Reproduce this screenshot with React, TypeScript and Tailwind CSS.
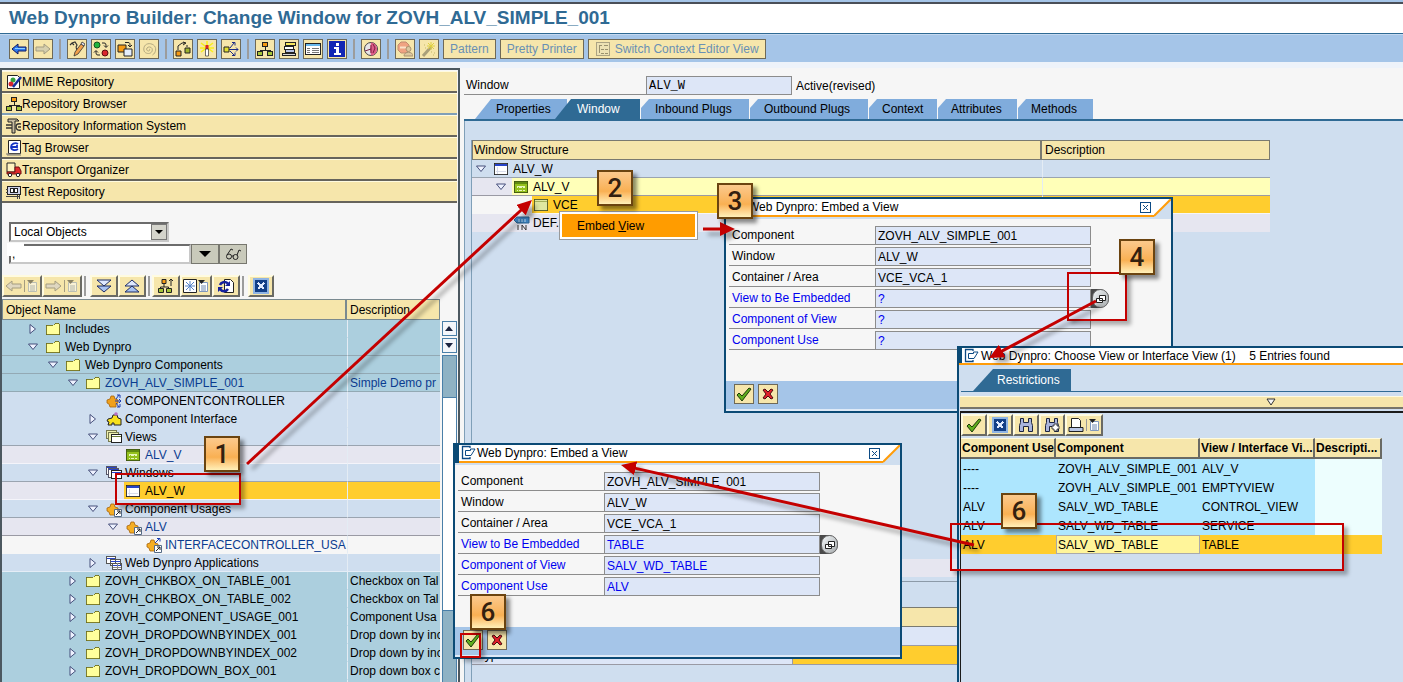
import { Fragment, ReactNode } from "react";
import clsx from "clsx";

interface IconProps {
  children: ReactNode;
  size?: string;
  crisp?: boolean;
}

const Icon = ({ children, size = "size-4", crisp }: IconProps) => (
  <svg
    viewBox="0 0 16 16"
    className={clsx("shrink-0", size)}
    fill="none"
    shapeRendering={crisp ? "crispEdges" : undefined}
    aria-hidden="true"
  >
    {children}
  </svg>
);

/* toolbar icons */

const BackIcon = () => (
  <Icon>
    <path d="M1 8l6-5v3h8v4H7v3z" fill="#2f7bf0" stroke="#101860" />
    <path d="M4 7.5h10" stroke="#8fd0ff" />
  </Icon>
);

const ForwardIcon = () => (
  <Icon>
    <path d="M15 8L9 3v3H1v4h8v3z" fill="#d6cfae" stroke="#a39c80" />
  </Icon>
);

const WrenchPencilIcon = () => (
  <Icon>
    <path d="M1 4l2-2 2 2M3 2l3-1 2 3-1 2M7 6l2 6" stroke="#333" strokeWidth="1.2" />
    <path d="M5 15l1-4 6-8 3 2-6 8z" fill="#f2a04c" stroke="#333" strokeWidth=".8" />
    <path d="M12 3l1-2 3 2-1 2z" fill="#e8e8f8" stroke="#333" strokeWidth=".8" />
  </Icon>
);

const StatusIcon = () => (
  <Icon>
    <circle cx="4" cy="4" r="3" fill="#1fb53c" stroke="#14521e" />
    <circle cx="12" cy="12" r="3" fill="#d9262c" stroke="#5a0d10" />
    <path d="M9 2h2c2 0 2 1 2 4M11 4.500l2 2 2-2M7 14H5c-2 0-2-1-2-4M1 11.500l2-2 2 2" stroke="#222" />
  </Icon>
);

const CopyIcon = () => (
  <Icon>
    <path d="M1 4h8v7H1z" fill="#f59a14" stroke="#222" />
    <path d="M7 8h8v7H7z" fill="#e4eefc" stroke="#222" />
    <path d="M8 1.500h3c2 0 2 1 2 4M11 4l2 2 2-2" stroke="#222" />
  </Icon>
);

const SpiralIcon = () => (
  <Icon>
    <path
      d="M8 8c1 0 1 2-.5 2S5 8.500 6 7s4-1.500 5 .5-.5 5-3.500 5S2 10.500 3 6.500 9 1.500 12.500 4s2.500 8-1 10"
      stroke="#b3a980"
    />
  </Icon>
);

const ConnectIcon = () => (
  <Icon>
    <path d="M1 10h5v5H1z" fill="#f59a14" stroke="#222" />
    <path d="M10 7h5v5h-5z" fill="#9db32d" stroke="#222" />
    <path d="M3 9V5l4-3h3M8 1l3 1-3 2M12 6V4" stroke="#222" />
  </Icon>
);

const MatchIcon = () => (
  <Icon>
    <path d="M2 2l12 9M14 2L2 11M8 0v5M1 7h14" stroke="#f7ee1a" strokeWidth="1.500" />
    <path d="M6.500 4h3v4h-3z" fill="#d8232a" />
    <path d="M6.500 8h3v7h-3z" fill="#fff" stroke="#333" strokeWidth=".7" />
  </Icon>
);

const BranchIcon = () => (
  <Icon>
    <path d="M1 6h5v5H1z" fill="#e2e030" stroke="#222" />
    <path d="M6 8.500h9M7 7l4-5M7 10l4 4M13 6.500l2 2-2 2M9 1.500h3v3M9 14.500h3v-3" stroke="#1d2c86" />
  </Icon>
);

const HierarchyIcon = () => (
  <Icon crisp>
    <path d="M8 6v3M3 11V9h10v2" stroke="#222" />
    <path d="M5.500 1.500h5v4h-5z" fill="#f59a14" stroke="#222" />
    <path d="M.5 10.500h5v4h-5zM10.500 10.500h5v4h-5z" fill="#a4c438" stroke="#222" />
  </Icon>
);

const StackIcon = () => (
  <Icon crisp>
    <path d="M4.500 1.500h10v3h-10z" fill="#f7e85e" stroke="#222" />
    <path d="M3.500 5.500h9v3h-9z" fill="#fff" stroke="#222" />
    <path d="M4.500 8.500h9v3h-9z" fill="#b7c4e4" stroke="#222" />
    <path d="M1.500 12.500h13v2h-13z" fill="#d8d8d8" stroke="#222" />
  </Icon>
);

const ListIcon = () => (
  <Icon crisp>
    <path d="M.5 2.500h15v11H.5z" fill="#fff" stroke="#222" />
    <path d="M1 3h14v2H1z" fill="#68b8ec" />
    <path d="M2 7h3M2 9h3M2 11h3M7 7h7M7 9h7M7 11h7" stroke="#777" />
  </Icon>
);

const InfoIcon = () => (
  <Icon crisp>
    <path d="M0 0h16v16H0z" fill="#1226b4" />
    <path d="M7 2h3v3H7zM5 6h5v6h2v2H5v-2h2V8H5z" fill="#fff" />
  </Icon>
);

const BallIcon = () => (
  <Icon>
    <circle cx="8" cy="8" r="6.500" fill="#e6e4e6" stroke="#444" />
    <path d="M8 1.500c8 1 8 12 0 13l-1-6z" fill="#dd5a86" />
    <path d="M8 4v8M2 10l6-2M10 3l2 4-2 5" stroke="#7b2043" />
  </Icon>
);

const StopIcon = () => (
  <Icon>
    <path d="M4 1h5l3 3v5l-3 3H4L1 9V4z" fill="#f0a382" stroke="#c08c70" />
    <path d="M3 6.500h6" stroke="#fbe2c8" strokeWidth="2" />
    <circle cx="11.500" cy="8" r="2.500" fill="#dcc8a0" stroke="#a89270" />
    <path d="M7 15c0-5 9-5 9 0z" fill="#dcc8a0" stroke="#a89270" />
  </Icon>
);

const WandIcon = () => (
  <Icon>
    <path d="M2 15l8-9" stroke="#aaa079" strokeWidth="3" />
    <path d="M10 1v8M6 5h8M7 2l6 6M13 2L7 8" stroke="#ded03e" />
    <path d="M10 11h1M13 12h1M12 14h1M3 4h1M4 7h1" stroke="#c3b76b" />
  </Icon>
);

const TreeListIcon = () => (
  <Icon crisp>
    <path d="M1.500 1.500h13v13h-13z" fill="#ede2b4" stroke="#aba383" />
    <path d="M4 4h3M4 4v8M6 8h3M6 12h3M9 4h4M10 8h3M10 12h3" stroke="#99916e" />
  </Icon>
);

/* navigation icons */

const MimeIcon = () => (
  <Icon>
    <path d="M1.500 1.500h10l2 2v11h-12z" fill="#fff" stroke="#222" />
    <circle cx="7" cy="6" r="2.500" fill="#35a33d" />
    <circle cx="5" cy="10" r="2.500" fill="#d5262c" />
    <path d="M7 13l8-10" stroke="#17309a" strokeWidth="2.500" />
  </Icon>
);

const ToolsIcon = () => (
  <Icon>
    <path d="M2 1h9l2 2H9v12H6V4H2z" fill="#c8bda0" stroke="#222" />
    <path d="M0 7h6M0 10h6M15 6c-4-1-5 1-5 3s2 4 5 3M15 9h-3" stroke="#333" strokeWidth="1.500" />
  </Icon>
);

const TagIcon = () => (
  <Icon>
    <path d="M2.500.5h12v13h-12z" fill="#fff" stroke="#222" />
    <path d="M0 14h14M1 15h14" stroke="#777" />
    <path d="M12 4c-3-2-7 0-7 3s4 4 7 2M5 7h6V5" stroke="#1534c4" strokeWidth="1.800" />
  </Icon>
);

const TruckIcon = () => (
  <Icon>
    <path d="M1 1h8v9H1z" fill="#fff3c0" stroke="#222" />
    <path d="M9 5h4l2 4v3H1v-2h8z" fill="#df2a2a" stroke="#701010" />
    <circle cx="4" cy="13" r="1.700" fill="#fff" stroke="#222" />
    <circle cx="12" cy="13" r="1.700" fill="#fff" stroke="#222" />
  </Icon>
);

const TestIcon = () => (
  <Icon crisp>
    <path d="M1.500 2.500h13v8h-13z" fill="#d0d4ea" stroke="#222" />
    <path d="M4.500 4.500h3v4h-3zM8.500 4.500h3v4h-3z" fill="#fff" stroke="#222" />
    <path d="M0 5h2M0 8h2M0 12h13M11 11v4M13 11v4" stroke="#444" />
  </Icon>
);

/* tree icons */

const FolderIcon = () => (
  <Icon size="h-[14px] w-[14px]" crisp>
    <path d="M.5 3.500h8l2-2h4l1 1v12H.5z" fill="#ffff9c" stroke="#6b6b1c" />
  </Icon>
);

const WindowIcon = () => (
  <Icon size="h-[14px] w-[14px]" crisp>
    <path d="M.5 1.500h15v13H.5z" fill="#fff" stroke="#222" />
    <path d="M1 2h14v2H1z" fill="#2744c8" />
    <path d="M4 6v8M2 11h12" stroke="#d4d8e8" />
  </Icon>
);

const ViewIcon = () => (
  <Icon size="h-[14px] w-[14px]" crisp>
    <path d="M.5 1.500h15v13H.5z" fill="#94c11c" stroke="#3c5410" />
    <path d="M1 2h14v2H1z" fill="#5f8a10" />
    <path d="M3 7h10M3 9h2M6 9h3M10 9h3M3 12h2M6 12h3M10 12h3" stroke="#f4ffd0" />
  </Icon>
);

const ContainerIcon = () => (
  <Icon size="h-[14px] w-[14px]" crisp>
    <path d="M.5 1.500h15v13H.5z" fill="#dfe7a0" stroke="#4c5420" />
    <path d="M1 4h14" stroke="#9aa850" />
  </Icon>
);

const ViewsIcon = () => (
  <Icon crisp>
    <path d="M.5 1.500h10v8H.5z" fill="#eef0b0" stroke="#777a50" />
    <path d="M2.500 3.500h10v9h-10z" fill="#eef0b0" stroke="#777a50" />
    <path d="M5.500 5.500h10v8h-10z" fill="#fff" stroke="#222" />
    <path d="M6 7h9" stroke="#6a7a30" />
  </Icon>
);

const WindowsIcon = () => (
  <Icon crisp>
    <path d="M.5 1.500h10v8H.5z" fill="#fff" stroke="#556" />
    <path d="M2.500 3.500h10v9h-10z" fill="#fff" stroke="#556" />
    <path d="M5.500 5.500h10v8h-10z" fill="#fff" stroke="#222" />
    <path d="M1 2h9M3 4h9M6 7h9" stroke="#2744c8" />
  </Icon>
);

const ApplicationsIcon = () => (
  <Icon crisp>
    <path d="M.5 1.500h9v7h-9zM4.500 4.500h10v6h-10zM6.500 8.500h9v6h-9z" fill="#fff" stroke="#555" />
    <path d="M1 3h8M5 6h9M7 10h8" stroke="#2744c8" />
    <path d="M11 8v7M7 12h8" stroke="#888" />
  </Icon>
);

const piece = "M1 7l3-1 1-3h3l1 3 3 1v3l-2 1v3H4l-1-3-2-1z";

const ControllerIcon = () => (
  <Icon>
    <path d={piece} fill="#f0a01c" stroke="#a8640a" strokeWidth=".8" />
    <path d="M9 8h6M10 6l3-4M10 10l3 4M11 2h3v3M11 14h3v-3M13 6l2 2-2 2" stroke="#1c3cb0" />
  </Icon>
);

const InterfaceIcon = () => (
  <Icon>
    <path d="M2 8l4-1 1-3h4l1 3 3 1v6H8v-2H6v2H2l1-3-2-1z" fill="#f7e01c" stroke="#222" />
    <circle cx="10" cy="3" r="1.800" fill="#b46fc0" />
  </Icon>
);

const UsageIcon = () => (
  <Icon>
    <path d={piece} fill="#f5ae24" stroke="#a8640a" strokeWidth=".8" />
    <path d="M8.500 8.500h7v7h-7z" fill="#fff" stroke="#556a86" />
    <path d="M10 14l4-4M11 10h3v3" stroke="#222" />
  </Icon>
);

const UsageControllerIcon = () => (
  <Icon>
    <path d={piece} fill="#f5ae24" stroke="#a8640a" strokeWidth=".8" />
    <path d="M9 6l4-4M11 1.500h3v3" stroke="#1c3cb0" />
    <path d="M8.500 8.500h7v7h-7z" fill="#fff" stroke="#556a86" />
    <path d="M10 14l4-4M11 10h3v3" stroke="#222" />
  </Icon>
);

const PlugIcon = () => (
  <Icon>
    <path d="M0 5l3-3h12v6H3z" fill="#3f86c4" stroke="#2a628f" />
    <path d="M5 4v3M8 4v3M11 4v3" stroke="#bfe0f5" />
    <path d="M4 10v5M8 15v-5l4 5v-5" stroke="#333" />
  </Icon>
);

/* browser panel icons */

const MenuSheet = ({ x }: { x: number }) => (
  <g transform={`translate(${x} 0)`}>
    <path d="M1.500 4.500h8v9h-8z" fill="#fff" stroke="#7f97bd" />
    <path d="M3 8h5M3 10h5M3 12h5" stroke="#6f88b0" />
    <path d="M0 2h7L3.500 6z" fill="#222" />
  </g>
);

const ArrowMenuIcon = ({ flip }: { flip?: boolean }) => (
  <svg viewBox="0 0 34 16" className="h-4 w-[34px] opacity-50" fill="none" aria-hidden="true">
    <path
      d={flip ? "M16 8l-6-5v3H1v4h9v3z" : "M1 8l6-5v3h9v4H7v3z"}
      fill="#c9c9d6"
      stroke="#555"
    />
    <path d="M19.500 2v12" stroke="#555" />
    <MenuSheet x={22} />
  </svg>
);

const ExpandIcon = () => (
  <Icon>
    <path d="M1 2h14L8 8z" fill="#dfe9ff" stroke="#1d2c66" />
    <path d="M1 8h14l-7 6z" fill="#a9c3f2" stroke="#1d2c66" />
  </Icon>
);

const CollapseIcon = () => (
  <Icon>
    <path d="M1 8h14L8 2z" fill="#dfe9ff" stroke="#1d2c66" />
    <path d="M1 14h14L8 8z" fill="#a9c3f2" stroke="#1d2c66" />
  </Icon>
);

const TreeUpIcon = () => (
  <Icon>
    <path d="M6 6v3M2.500 11V9h8v2" stroke="#222" />
    <path d="M4 1.500h4v4H4z" fill="#f59a14" stroke="#222" />
    <path d="M.5 10.500h5v4h-5zM8.500 10.500h5v4h-5z" fill="#a4c438" stroke="#222" />
    <path d="M13 8V1M11 3l2-2 2 2" stroke="#222" />
  </Icon>
);

const NewMenuIcon = () => (
  <svg viewBox="0 0 26 16" className="h-4 w-[26px]" fill="none" aria-hidden="true">
    <path d="M.5 1.500h13v13H.5z" fill="#fff" stroke="#222" />
    <path d="M7 3v10M2 8h10M3 4l8 8M11 4l-8 8" stroke="#5583c8" />
    <MenuSheet x={15} />
  </svg>
);

const RefreshIcon = () => (
  <Icon>
    <path d="M6.500 1.500h6l3 3v10h-9z" fill="#fff" stroke="#222" />
    <path d="M10 5.500C7 3 3 4 2 7M2 11c2 3 6 3 8 0" stroke="#14209c" strokeWidth="2.500" />
    <path d="M7 8h5V3zM5 9H0v5z" fill="#14209c" />
  </Icon>
);

const CloseBoxIcon = () => (
  <Icon crisp>
    <path d="M.5.5h15v15H.5z" fill="#8fb4e4" stroke="#8fb4e4" />
    <path d="M2 2h12v12H2z" fill="#123f86" />
    <path d="M5 5l6 6M11 5l-6 6" stroke="#dfeaff" strokeWidth="1.500" />
  </Icon>
);

const GlassesIcon = () => (
  <Icon>
    <circle cx="4" cy="10.500" r="2.500" stroke="#222" />
    <circle cx="10.500" cy="11" r="2.500" stroke="#222" />
    <path d="M2 9l4-6 2 1M12 9l2-5 2 1M6.500 10h2" stroke="#222" />
  </Icon>
);

const CheckIcon = () => (
  <Icon>
    <path d="M1 9l2-2 3 3 7-8 2 1-9 12z" fill="#5fae1e" stroke="#1c3a08" />
  </Icon>
);

const CrossIcon = () => (
  <Icon>
    <path
      d="M3 4l2-1 3 3 3-3 2 1-3 4 3 4-2 1-3-3-3 3-2-1 3-4z"
      fill="#e0202a"
      stroke="#4a0a0e"
    />
  </Icon>
);

const FindIcon = ({ plus }: { plus?: boolean }) => (
  <Icon>
    <path
      d="M2.500 1.500h3v4h5v-4h3v4l1 3v6h-4v-5h-5v5h-4v-6l1-3z"
      fill="#a9b4dc"
      stroke="#1c2440"
    />
    {plus && (
      <path d="M10 7h3v2h2v3h-2v2h-3v-2H8V9h2z" fill="#fff" stroke="#222" strokeWidth=".8" />
    )}
  </Icon>
);

const PrintMenuIcon = () => (
  <svg viewBox="0 0 32 16" className="h-4 w-8" fill="none" aria-hidden="true">
    <path d="M3.500 1.500h7l2 2v7h-9z" fill="#fff" stroke="#222" />
    <path d="M1 10.500h14v4H1z" fill="#b8c6e6" stroke="#222" />
    <path d="M18.500 2v12" stroke="#999" />
    <MenuSheet x={21} />
  </svg>
);

const ExitIcon = () => (
  <Icon>
    <path d="M9 3V1.500H1.500v12H9V12" stroke="#0d4a84" strokeWidth="1.300" />
    <path d="M4.500 5.500h5V4h4.500l-4 6.500h-5.500z" fill="#fff" stroke="#0d4a84" />
  </Icon>
);

/* shared pieces */

const buttonSizes = {
  flat: "size-5 border border-[#6e6957]",
  small:
    "h-[22px] border-2 border-t-[#fffbe0] border-r-[#6a6a64] border-b-[#6a6a64] border-l-[#fffbe0] px-[3px]",
  large:
    "h-[22px] border-2 border-t-[#fffbe0] border-r-[#6a6a64] border-b-[#6a6a64] border-l-[#fffbe0] px-1",
};

const ToolButton = ({
  label,
  children,
  size = "flat",
}: {
  label: string;
  children: ReactNode;
  size?: keyof typeof buttonSizes;
}) => (
  <button
    aria-label={label}
    className={clsx("flex shrink-0 items-center justify-center bg-[#f6e6ab]", buttonSizes[size])}
  >
    {children}
  </button>
);

const Separator = () => (
  <span className="flex h-5 w-[6px] shrink-0 justify-center">
    <span className="h-full w-0.5 bg-[#9c9c9c]" />
  </span>
);

const Expander = ({ open }: { open: boolean }) => (
  <svg viewBox="0 0 10 10" className="size-[10px]" aria-hidden="true">
    <path
      d={open ? "M.5 2h9L5 7.500z" : "M2 .5v9L7.500 5z"}
      fill="#eef2ff"
      stroke="#35406e"
      strokeWidth=".9"
    />
  </svg>
);

interface TreeNode {
  name: string;
  level: number;
  icon: ReactNode;
  open?: boolean;
  link?: boolean;
  description?: string;
  row: string;
  mark?: string;
}

const TreeRow = ({ node, base }: { node: TreeNode; base: number }) => (
  <tr className={clsx("h-[18px]", node.row)}>
    <td className="overflow-hidden border-b border-inherit p-0">
      <div
        className={clsx("flex h-[17px] items-center whitespace-nowrap", node.link && "text-[#0b3c90]")}
        style={{ paddingLeft: base + node.level * 20 }}
      >
        <span className="flex w-4 shrink-0">
          {node.open !== undefined && <Expander open={node.open} />}
        </span>
        <span className={clsx("flex h-full grow items-center gap-[5px] pl-0.5", node.mark)}>
          <span className="flex w-[14px] shrink-0">{node.icon}</span>
          {node.name}
        </span>
      </div>
    </td>
    <td
      className={clsx(
        "overflow-hidden border-b border-l border-inherit border-l-[#e4ecf4] p-0 pl-0.5 whitespace-nowrap",
        node.link && "text-[#0b3c90]",
        node.mark
      )}
    >
      {node.description}
    </td>
  </tr>
);

const teal = "bg-[#accfde] border-[#accfde]";
const tealLine = "bg-[#accfde] border-[#93a9b4]";
const blue = "bg-[#cfdeef] border-[#cfdeef]";
const blueLine = "bg-[#cfdeef] border-[#9aa4b0]";
const lilac = "bg-[#e6e6f0] border-[#f4f4fa]";
const lilacLine = "bg-[#e6e6f0] border-[#9a9aa4]";
const pale = "bg-[#f6f6f6] border-[#f6f6f6]";

const objects: TreeNode[] = [
  { name: "Includes", level: 1, icon: <FolderIcon />, open: false, row: teal },
  { name: "Web Dynpro", level: 1, icon: <FolderIcon />, open: true, row: tealLine },
  { name: "Web Dynpro Components", level: 2, icon: <FolderIcon />, open: true, row: tealLine },
  {
    name: "ZOVH_ALV_SIMPLE_001",
    level: 3,
    icon: <FolderIcon />,
    open: true,
    link: true,
    description: "Simple Demo pr",
    row: tealLine,
  },
  { name: "COMPONENTCONTROLLER", level: 4, icon: <ControllerIcon />, row: blue },
  { name: "Component Interface", level: 4, icon: <InterfaceIcon />, open: false, row: blue },
  { name: "Views", level: 4, icon: <ViewsIcon />, open: true, row: blueLine },
  { name: "ALV_V", level: 5, icon: <ViewIcon />, link: true, row: lilac },
  { name: "Windows", level: 4, icon: <WindowsIcon />, open: true, row: blueLine },
  { name: "ALV_W", level: 5, icon: <WindowIcon />, row: lilac, mark: "bg-[#ffcd2e]" },
  { name: "Component Usages", level: 4, icon: <UsageIcon />, open: true, row: blueLine },
  { name: "ALV", level: 5, icon: <UsageIcon />, open: true, link: true, row: lilacLine },
  { name: "INTERFACECONTROLLER_USA", level: 6, icon: <UsageControllerIcon />, link: true, row: pale },
  {
    name: "Web Dynpro Applications",
    level: 4,
    icon: <ApplicationsIcon />,
    open: false,
    row: "bg-[#cfdeef] border-[#e4edf6]",
  },
  ...[
    ["ZOVH_CHKBOX_ON_TABLE_001", "Checkbox on Tal"],
    ["ZOVH_CHKBOX_ON_TABLE_002", "Checkbox on Tal"],
    ["ZOVH_COMPONENT_USAGE_001", "Component Usa"],
    ["ZOVH_DROPDOWNBYINDEX_001", "Drop down by inc"],
    ["ZOVH_DROPDOWNBYINDEX_002", "Drop down by inc"],
    ["ZOVH_DROPDOWN_BOX_001", "Drop down box c"],
    ["", ""],
  ].map(([name, description]) => ({
    name,
    description,
    level: 3,
    icon: <FolderIcon />,
    open: false,
    row: teal,
  })),
];

const structure: TreeNode[] = [
  { name: "ALV_W", level: 1, icon: <WindowIcon />, open: true, row: blueLine },
  { name: "ALV_V", level: 2, icon: <ViewIcon />, open: true, row: lilacLine, mark: "bg-[#ffffb8]" },
  { name: "VCE", level: 3, icon: <ContainerIcon />, row: pale, mark: "bg-[#ffcd2e]" },
  { name: "DEF.", level: 2, icon: <PlugIcon />, row: "bg-[#e6e6f0] border-[#e6e6f0]" },
];

/* page sections */

const toolGroups: [string, ReactNode][][] = [
  [
    ["Back", <BackIcon />],
    ["Forward", <ForwardIcon />],
  ],
  [
    ["Display / Change", <WrenchPencilIcon />],
    ["Active / Inactive", <StatusIcon />],
    ["Other Object", <CopyIcon />],
    ["Enhance", <SpiralIcon />],
  ],
  [
    ["Check", <ConnectIcon />],
    ["Activate", <MatchIcon />],
    ["Where-Used List", <BranchIcon />],
  ],
  [
    ["Object List", <HierarchyIcon />],
    ["Navigation Window", <StackIcon />],
    ["Full Screen", <ListIcon />],
    ["Help", <InfoIcon />],
  ],
  [["Wizard", <BallIcon />]],
  [
    ["Stop", <StopIcon />],
    ["Magic", <WandIcon />],
  ],
];

const Toolbar = () => (
  <div className="flex h-7 shrink-0 items-center gap-1 border-t border-[#c5d9f0] bg-[#a5c5e8] px-[9px]">
    {toolGroups.map((group, i) => (
      <Fragment key={i}>
        {i > 0 && <Separator />}
        {group.map(([label, icon]) => (
          <ToolButton key={label} label={label}>
            {icon}
          </ToolButton>
        ))}
      </Fragment>
    ))}
    {["Pattern", "Pretty Printer", "Switch Context Editor View"].map((label, i) => (
      <button
        key={label}
        className="flex h-5 items-center gap-1 border border-[#6e6957] bg-[#f6e6ab] px-[6px] whitespace-nowrap text-[#6990b4]"
      >
        {i === 2 && <TreeListIcon />}
        {label}
      </button>
    ))}
  </div>
);

const navItems: [string, ReactNode][] = [
  ["MIME Repository", <MimeIcon />],
  ["Repository Browser", <HierarchyIcon />],
  ["Repository Information System", <ToolsIcon />],
  ["Tag Browser", <TagIcon />],
  ["Transport Organizer", <TruckIcon />],
  ["Test Repository", <TestIcon />],
];

const ScrollButton = ({ label, d }: { label: string; d: string }) => (
  <button
    aria-label={label}
    className="flex h-[15px] w-[15px] items-center justify-center border border-[#4a7fa8] bg-[#f4f6fa]"
  >
    <svg viewBox="0 0 8 5" className="h-[5px] w-2" aria-hidden="true">
      <path d={d} fill="#1c2440" />
    </svg>
  </button>
);

const Browser = () => (
  <aside className="flex w-[460px] shrink-0 flex-col overflow-hidden border-t-2 border-r-2 border-l-2 border-[#4c5860] bg-[#f6f6f6]">
    <nav className="flex flex-col pt-px pr-px">
      {navItems.map(([label, icon], i) => (
        <button
          key={label}
          className={clsx(
            "flex h-[22px] items-center border-t border-b-2 border-t-[#fffbe0] bg-[#f6e6ab] pl-1",
            i === 1 ? "border-b-[#7f9fb8]" : "border-b-[#66645c]"
          )}
        >
          {icon}
          {label}
        </button>
      ))}
    </nav>

    <div className="flex flex-col gap-0.5 px-[7px] pt-[19px]">
      <div className="relative w-[160px]">
        <select
          aria-label="Object category"
          className="h-5 w-full appearance-none border-2 border-[#6c6c6c] border-r-[#c8c8c8] border-b-[#c8c8c8] bg-white pl-[3px]"
        >
          <option>Local Objects</option>
        </select>
        <span className="pointer-events-none absolute top-0.5 right-0.5 flex h-4 w-4 items-center justify-center border border-[#777] bg-[#d4d4cc]">
          <svg viewBox="0 0 8 4" className="h-1 w-2" aria-hidden="true">
            <path d="M0 0h8L4 4z" />
          </svg>
        </span>
      </div>
      <div className="relative flex">
        <input
          aria-label="Object name"
          defaultValue=","
          className="h-5 w-[182px] border-2 border-[#6c6c6c] border-r-[#c8c8c8] border-b-[#c8c8c8] bg-white pl-px"
        />
        <span className="absolute -top-px -left-0.5 h-[13px] w-[17px] bg-white" />
        <button
          aria-label="History"
          className="flex h-5 w-7 items-center justify-center border border-[#77776f] bg-[#c9cabb]"
        >
          <svg viewBox="0 0 12 6" className="h-[6px] w-3" aria-hidden="true">
            <path d="M0 0h12L6 6z" />
          </svg>
        </button>
        <button
          aria-label="Display"
          className="flex h-5 w-7 items-center justify-center border border-[#77776f] bg-[#c9cabb]"
        >
          <GlassesIcon />
        </button>
      </div>
    </div>

    <div className="mt-[11px] flex items-center">
      <ToolButton label="Previous object" size="large">
        <span className="-mx-[3px]">
          <ArrowMenuIcon />
        </span>
      </ToolButton>
      <ToolButton label="Next object" size="large">
        <span className="-mx-[3px]">
          <ArrowMenuIcon flip />
        </span>
      </ToolButton>
      <Separator />
      <span className="w-0.5" />
      <ToolButton label="Expand" size="large">
        <ExpandIcon />
      </ToolButton>
      <ToolButton label="Collapse" size="large">
        <CollapseIcon />
      </ToolButton>
      <Separator />
      <ToolButton label="Up one level" size="large">
        <TreeUpIcon />
      </ToolButton>
      <ToolButton label="Favorites" size="large">
        <span className="-mx-[3px]">
          <NewMenuIcon />
        </span>
      </ToolButton>
      <ToolButton label="Refresh" size="large">
        <RefreshIcon />
      </ToolButton>
      <Separator />
      <span className="w-0.5" />
      <ToolButton label="Close" size="small">
        <CloseBoxIcon />
      </ToolButton>
    </div>

    <div className="mt-0.5 flex min-h-0 flex-1">
      <div className="w-[438px] overflow-hidden">
        <table className="w-full table-fixed border-separate border-spacing-0 leading-4">
          <colgroup>
            <col className="w-[345px]" />
            <col />
          </colgroup>
          <thead>
            <tr className="h-[21px] bg-[#f6e6ab] text-left">
              <th className="border border-r-2 border-[#7a8a90] p-0 pl-[3px] font-normal">Object Name</th>
              <th className="border-y border-r border-[#7a8a90] p-0 pl-[3px] font-normal">Description</th>
            </tr>
          </thead>
          <tbody>
            {objects.map((node, i) => (
              <TreeRow key={i} node={node} base={6} />
            ))}
          </tbody>
        </table>
      </div>
      <div className="flex flex-1 flex-col items-center gap-0.5 bg-[#f6f6f6] pt-[22px]">
        <ScrollButton label="Scroll up" d="M0 5h8L4 0z" />
        <ScrollButton label="Scroll down" d="M0 0h8L4 5z" />
        <div className="flex w-[15px] flex-1 flex-col border-x border-[#4a7fa8] bg-white">
          <span className="h-[43px] border-y border-[#4a7fa8] bg-[#8fb2c4]" />
          <span className="h-[212px]" />
          <span className="flex-1 border-t border-[#4a7fa8] bg-[#8fb2c4]" />
        </div>
      </div>
    </div>
  </aside>
);

const slant = "[clip-path:polygon(16px_0,100%_0,100%_100%,0_100%)]";
const notch = "ml-px [clip-path:polygon(8px_0,100%_0,100%_100%,0_100%,0_9px)]";

const tabs = [
  { label: "Properties", className: clsx(slant, "w-[92px] bg-[#80acdc] pl-[21px]") },
  { label: "Window", className: clsx(slant, "-ml-3 w-[85px] bg-[#2f6a94] pl-[22px] text-white") },
  { label: "Inbound Plugs", className: clsx(notch, "w-[108px] bg-[#80acdc] pl-[14px]") },
  { label: "Outbound Plugs", className: clsx(notch, "w-[118px] bg-[#80acdc] pl-[14px]") },
  { label: "Context", className: clsx(notch, "w-[68px] bg-[#80acdc] pl-[13px]") },
  { label: "Attributes", className: clsx(notch, "w-[79px] bg-[#80acdc] pl-[13px]") },
  { label: "Methods", className: clsx(notch, "w-[75px] bg-[#80acdc] pl-[13px]") },
];

const Editor = () => (
  <main className="flex min-w-0 flex-1 flex-col bg-[#f6f6f6] pl-1">
    <div className="flex shrink-0 items-end pt-2">
      <label htmlFor="window" className="flex h-[19px] w-[182px] items-center border-b border-[#8c8c8c] pl-0.5">
        Window
      </label>
      <input
        id="window"
        readOnly
        value="ALV_W"
        className="h-[19px] w-[146px] border border-[#8c8c8c] bg-[#dde6f7] pl-0.5 font-['Liberation_Mono',monospace]"
      />
      <span className="pb-px pl-1">Active(revised)</span>
    </div>

    <div className="mt-1 flex shrink-0 border-b-2 border-[#2f6a94] pl-[11px]">
      {tabs.map((tab) => (
        <button key={tab.label} className={clsx("h-5 shrink-0 text-left whitespace-nowrap", tab.className)}>
          {tab.label}
        </button>
      ))}
    </div>

    <div className="min-h-0 flex-1 overflow-hidden border-l border-[#7f9fb8] bg-[#cfdeef] pt-[19px] pl-[6px]">
      <div className="flex min-h-full flex-col border-l border-[#7f9fb8]">
        <div className="h-[419px]">
          <table className="w-[798px] table-fixed border-separate border-spacing-0 leading-4">
            <colgroup>
              <col className="w-[570px]" />
              <col />
            </colgroup>
            <thead>
              <tr className="h-[20px] bg-[#f6e6ab] text-left">
                <th className="border border-r-2 border-[#7a7a70] p-0 pl-px font-normal">Window Structure</th>
                <th className="border-y border-r border-[#7a7a70] p-0 pl-[3px] font-normal">Description</th>
              </tr>
            </thead>
            <tbody>
              {structure.map((node) => (
                <TreeRow key={node.name} node={node} base={-16} />
              ))}
            </tbody>
          </table>
        </div>
        <div className="h-[18px] w-[798px] bg-[#e6e6f0]" />
        <div className="mt-1 h-[26px] border-t border-[#8c9aa8]" />
        <table className="w-[798px] table-fixed border-separate border-spacing-0 leading-4">
          <colgroup>
            <col className="w-[320px]" />
            <col />
          </colgroup>
          <thead>
            <tr className="h-5 bg-[#f6e6ab] text-left">
              <th className="border border-[#7a7a70] p-0 pl-[6px] font-normal">Property</th>
              <th className="border-y border-[#7a7a70] p-0 pl-1 font-normal">Value</th>
            </tr>
          </thead>
          <tbody>
            <tr className="h-[19px] bg-[#dde6f7]">
              <td className="border-b border-[#9a9aa4] p-0 pl-[6px]">Name</td>
              <td className="border-b border-l border-[#9a9aa4] p-0 pl-1">VCE</td>
            </tr>
            <tr className="h-[19px]">
              <td className="border-b border-[#9a9aa4] bg-[#dde6f7] p-0 pl-[6px]">Type</td>
              <td className="border-b border-l border-[#9a9aa4] bg-[#ffcd2e] p-0 pl-1">View-Container</td>
            </tr>
          </tbody>
        </table>
      </div>
    </div>
  </main>
);

/* popups */

interface EmbedDialogProps {
  id: string;
  className: string;
  view: string;
  componentOfView: string;
  componentUse: string;
}

const EmbedDialog = ({ id, className, view, componentOfView, componentUse }: EmbedDialogProps) => {
  const fields = [
    { label: "Component", value: "ZOVH_ALV_SIMPLE_001" },
    { label: "Window", value: "ALV_W" },
    { label: "Container / Area", value: "VCE_VCA_1" },
    { label: "View to Be Embedded", value: view, editable: true, help: true },
    { label: "Component of View", value: componentOfView, editable: true },
    { label: "Component Use", value: componentUse, editable: true },
  ];

  return (
    <section
      role="dialog"
      aria-label="Web Dynpro: Embed a View"
      className={clsx("absolute flex w-[449px] flex-col border-2 border-[#0b4a75] bg-[#f6f6f6]", className)}
    >
      <header className="flex h-[18px] items-center bg-[#cfdeef]">
        <span className="h-full w-1 shrink-0 bg-[#0b4a75]" />
        <div className="flex h-full flex-1 items-center border-b-2 border-[#ff9c0a] bg-white pr-[3px] pl-0.5">
          <ExitIcon />
          <h2 className="flex-1">Web Dynpro: Embed a View</h2>
          <button
            aria-label="Close"
            className="flex size-[11px] items-center justify-center border border-[#0d4a84] bg-white"
          >
            <svg viewBox="0 0 7 7" className="size-[7px]" stroke="#0d4a84" aria-hidden="true">
              <path d="M1 1l5 5M6 1L1 6" />
            </svg>
          </button>
        </div>
        <svg viewBox="0 0 17 18" className="h-[18px] w-[17px] shrink-0" aria-hidden="true">
          <path d="M0 0h17L0 17z" fill="#fff" />
          <path d="M0 17L17 0" stroke="#ff9c0a" strokeWidth="2" />
        </svg>
      </header>

      <form className="flex flex-col gap-0.5 border-t-2 border-[#cfdeef] px-[3px] pt-[7px] pb-[31px]">
        {fields.map((field) => (
          <div key={field.label} className={clsx("flex", field.editable && "text-[#0000f0]")}>
            <label
              htmlFor={`${id}-${field.label}`}
              className="flex h-[19px] w-[146px] items-center border-b border-[#8c8c8c] pl-[3px]"
            >
              {field.label}
            </label>
            <input
              id={`${id}-${field.label}`}
              defaultValue={field.value}
              readOnly={!field.editable}
              className="h-[19px] w-[216px] border border-[#8c8c8c] bg-[#dde6f7] pl-0.5"
            />
            {field.help && (
              <button
                type="button"
                aria-label="Search help"
                className="flex h-[19px] w-[18px] items-center justify-end rounded-r-full bg-[#4a4a4a]"
              >
                <span className="flex h-[19px] w-[17px] items-center justify-center rounded-full border border-[#6a6a6a] bg-linear-to-br from-[#f2f6f8] to-[#a8acae]">
                  <svg viewBox="0 0 10 10" className="size-[10px]" fill="#fff" stroke="#222" aria-hidden="true">
                    <path d="M3.500 1.500h6v5h-6zM.5 4.500h6v4h-6z" />
                  </svg>
                </span>
              </button>
            )}
          </div>
        ))}
      </form>

      <footer className="flex h-[30px] items-start gap-1 border-b-2 border-[#dfeaf7] bg-[#a5c5e8] px-2 pt-[3px]">
        <ToolButton label="Continue">
          <CheckIcon />
        </ToolButton>
        <ToolButton label="Cancel">
          <CrossIcon />
        </ToolButton>
      </footer>
    </section>
  );
};

const entries = [
  ["----", "ZOVH_ALV_SIMPLE_001", "ALV_V"],
  ["----", "ZOVH_ALV_SIMPLE_001", "EMPTYVIEW"],
  ["ALV", "SALV_WD_TABLE", "CONTROL_VIEW"],
  ["ALV", "SALV_WD_TABLE", "SERVICE"],
  ["ALV", "SALV_WD_TABLE", "TABLE"],
];

const ChooseViewDialog = () => (
  <section
    role="dialog"
    aria-label="Web Dynpro: Choose View or Interface View"
    className="absolute top-[346px] right-0 bottom-0 left-[957px] flex flex-col overflow-hidden border-t-2 border-l-2 border-[#0b4a75] bg-[#cfdeef]"
  >
    <header className="flex h-[17px] shrink-0 items-center border-b-2 border-[#ff9c0a] bg-white">
      <span className="h-full w-[3px] shrink-0 bg-[#0b4a75]" />
      <span className="ml-0.5 flex">
        <ExitIcon />
      </span>
      <h2 className="pl-px whitespace-pre">Web Dynpro: Choose View or Interface View (1)    5 Entries found</h2>
    </header>

    <div className="mx-0.5 mt-1 flex shrink-0 border-b border-[#2f6a94] pl-3">
      <button className="h-[22px] w-[98px] bg-[#2f6a94] pl-6 text-left text-white [clip-path:polygon(20px_0,100%_0,100%_100%,0_100%)]">
        Restrictions
      </button>
    </div>

    <button
      aria-label="Show restrictions"
      className="mt-1 ml-px flex h-[13px] shrink-0 items-center justify-center border-t border-b-2 border-t-[#fffbe0] border-b-[#77756a] bg-[#f6e6ab] pl-[178px]"
    >
      <svg viewBox="0 0 10 8" className="h-2 w-[10px]" aria-hidden="true">
        <path d="M1 1h8L5 7z" fill="#f5f5f5" stroke="#333" />
      </svg>
    </button>

    <div className="mt-0.5 ml-px flex min-h-0 flex-1 flex-col border-t-2 border-l border-[#1a1a1a]">
      <div className="flex py-px">
        <ToolButton label="Copy" size="small">
          <CheckIcon />
        </ToolButton>
        <ToolButton label="Close" size="small">
          <CloseBoxIcon />
        </ToolButton>
        <ToolButton label="Find" size="small">
          <FindIcon />
        </ToolButton>
        <ToolButton label="Find next" size="small">
          <FindIcon plus />
        </ToolButton>
        <ToolButton label="Print" size="small">
          <span className="-mx-0.5">
            <PrintMenuIcon />
          </span>
        </ToolButton>
      </div>

      <table className="mt-px w-[421px] table-fixed border-separate border-spacing-0 leading-4 whitespace-nowrap">
        <colgroup>
          <col className="w-[95px]" />
          <col className="w-[144px]" />
          <col className="w-[115px]" />
          <col />
        </colgroup>
        <thead>
          <tr className="h-[21px] bg-[#f6e6ab] text-left">
            {["Component Use", "Component", "View / Interface Vi...", "Descripti..."].map((name) => (
              <th
                key={name}
                className="border-t border-r-2 border-b-2 border-t-[#fffbe0] border-r-[#6a6a64] border-b-[#6a6a64] p-0 pl-px font-bold"
              >
                {name}
              </th>
            ))}
          </tr>
        </thead>
        <tbody>
          {entries.map((entry, i) => {
            const selected = i === entries.length - 1;
            return (
              <tr key={i} className={clsx("h-[19px]", selected ? "bg-[#ffcd2e]" : "bg-[#ade6fe]")}>
                {entry.map((value, column) => (
                  <td
                    key={column}
                    className={clsx(
                      "p-0 pl-0.5",
                      selected && column === 1 && "bg-[#fff59a] outline outline-offset-[-1px] outline-[#aaa]"
                    )}
                  >
                    {value}
                  </td>
                ))}
                <td className={clsx("p-0", !selected && "bg-[#edfefe]")} />
              </tr>
            );
          })}
        </tbody>
      </table>
    </div>
  </section>
);

const ContextMenu = () => (
  <div role="menu" className="absolute top-[211px] left-[559px] border border-[#999] bg-white p-0.5">
    <button
      role="menuitem"
      className="block h-[23px] w-[133px] bg-[#ff9c00] pl-[15px] text-left"
    >
      Embed <u>V</u>iew
    </button>
  </div>
);

/* annotations */

const steps = [
  { text: "1", className: "left-[204px] top-[436px]" },
  { text: "2", className: "left-[597px] top-[170px]" },
  { text: "3", className: "left-[717px] top-[183px]" },
  { text: "4", className: "left-[1119px] top-[239px]" },
  { text: "6", className: "left-[1001px] top-[493px]" },
  { text: "6", className: "left-[470px] top-[594px]" },
];

const frames = [
  "left-[115px] top-[473px] h-8 w-[126px]",
  "left-[1067px] top-[272px] h-[49px] w-[60px]",
  "left-[950px] top-[523px] h-12 w-[394px]",
  "left-[460px] top-[633px] h-[25px] w-[21px]",
];

const arrows = [
  [247, 464, 532, 200],
  [703, 229, 735, 229],
  [1096, 301, 989, 358],
  [974, 545, 621, 465],
];

// an arrow stops short of its tip so that the head stays pointed
const shaftEnd = ([x1, y1, x2, y2]: number[]) => {
  const length = Math.hypot(x2 - x1, y2 - y1);
  const t = (length - 14) / length;
  return { x2: x1 + (x2 - x1) * t, y2: y1 + (y2 - y1) * t };
};

const Annotations = () => (
  <div className="pointer-events-none absolute inset-0">
    {frames.map((frame) => (
      <div
        key={frame}
        className={clsx("absolute border-2 border-[#c40000] shadow-[4px_4px_4px_rgba(0,0,0,0.3)]", frame)}
      />
    ))}
    <svg className="absolute inset-0 h-full w-full drop-shadow-[5px_5px_2px_rgba(0,0,0,0.35)]" aria-hidden="true">
      <defs>
        <marker
          id="head"
          markerUnits="userSpaceOnUse"
          markerWidth="16"
          markerHeight="14"
          refX="1"
          refY="7"
          orient="auto"
        >
          <path d="M0 0l15 7-15 7z" fill="#c40000" />
        </marker>
      </defs>
      {arrows.map((arrow, i) => (
        <line
          key={i}
          x1={arrow[0]}
          y1={arrow[1]}
          {...shaftEnd(arrow)}
          stroke="#c40000"
          strokeWidth="3"
          markerEnd="url(#head)"
        />
      ))}
    </svg>
    {steps.map((step) => (
      <span
        key={step.className}
        className={clsx(
          "absolute flex size-9 items-center justify-center border-2 border-[#6b4410] bg-linear-to-b from-[#fbc98c] via-[#f9b052] via-60% to-[#fff0b8] font-[Roboto,sans-serif] text-[26px] leading-none font-medium text-[#33200f] shadow-[4px_4px_4px_rgba(0,0,0,0.45)]",
          step.className
        )}
      >
        {step.text}
      </span>
    ))}
  </div>
);

export default function App() {
  return (
    <div className="relative flex h-screen flex-col overflow-hidden bg-[#eef3fa] font-['Liberation_Sans',Arial,sans-serif] text-[12px] leading-4 text-black">
      <header className="shrink-0 border-t-2 border-[#a5c5e8] bg-white">
        <h1 className="h-8 border-t-2 border-b border-t-[#4a4f58] border-b-[#2f6a94] pl-[9px] text-[19px] leading-[28px] font-bold whitespace-nowrap text-[#2f6a94]">
          Web Dynpro Builder: Change Window for ZOVH_ALV_SIMPLE_001
        </h1>
      </header>
      <Toolbar />
      <div className="mt-[6px] flex min-h-0 flex-1">
        <Browser />
        <Editor />
      </div>
      <EmbedDialog
        id="empty"
        className="top-[197px] left-[724px]"
        view="?"
        componentOfView="?"
        componentUse="?"
      />
      <ContextMenu />
      <ChooseViewDialog />
      <EmbedDialog
        id="filled"
        className="top-[443px] left-[453px]"
        view="TABLE"
        componentOfView="SALV_WD_TABLE"
        componentUse="ALV"
      />
      <Annotations />
    </div>
  );
}
